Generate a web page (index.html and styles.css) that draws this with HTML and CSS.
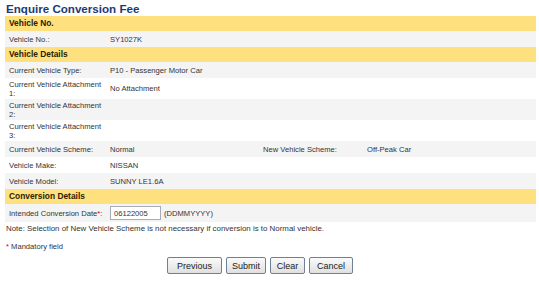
FILE: index.html
```html
<!DOCTYPE html>
<html>
<head>
<meta charset="utf-8">
<link rel="stylesheet" href="styles.css">
</head>
<body>
<div class="page">
  <h1 class="title">Enquire Conversion Fee</h1>
  <div class="section">Vehicle No.</div>
  <div class="row alt"><div class="lbl">Vehicle No.:</div><div class="val">SY1027K</div></div>
  <div class="section">Vehicle Details</div>
  <div class="row alt"><div class="lbl">Current Vehicle Type:</div><div class="val">P10 - Passenger Motor Car</div></div>
  <div class="row dbl"><div class="lbl">Current Vehicle Attachment 1:</div><div class="val">No Attachment</div></div>
  <div class="row dbl alt"><div class="lbl">Current Vehicle Attachment 2:</div><div class="val"></div></div>
  <div class="row dbl"><div class="lbl">Current Vehicle Attachment 3:</div><div class="val"></div></div>
  <div class="row alt"><div class="lbl">Current Vehicle Scheme:</div><div class="val">Normal</div><div class="lbl">New Vehicle Scheme:</div><div class="val">Off-Peak Car</div></div>
  <div class="row"><div class="lbl">Vehicle Make:</div><div class="val">NISSAN</div></div>
  <div class="row alt"><div class="lbl">Vehicle Model:</div><div class="val">SUNNY LE1.6A</div></div>
  <div class="section">Conversion Details</div>
  <div class="row alt inrow"><div class="lbl nowrap">Intended Conversion Date<span class="req">*</span>:</div><div class="val wide"><input class="field" type="text" value="06122005"><span class="hint">(DDMMYYYY)</span></div></div>
  <p class="note">Note: Selection of New Vehicle Scheme is not necessary if conversion is to Normal vehicle.</p>
  <p class="mand"><span class="req">*</span> Mandatory field</p>
  <div class="buttons">
    <button class="btn b-prev">Previous</button>
    <button class="btn b-sub">Submit</button>
    <button class="btn b-clr">Clear</button>
    <button class="btn b-can">Cancel</button>
  </div>
</div>
</body>
</html>
```
FILE: styles.css
```css
html, body { margin: 0; padding: 0; background: #fff; }
body { font-family: "Liberation Sans", Arial, sans-serif; font-size: 7.6px; color: #333; }
.page { padding: 0 3px 0 5px; }
.title { margin: 0; height: 16px; box-sizing: border-box; padding: 2px 0 0 1px; font-size: 11.6px; line-height: 14px; font-weight: bold; color: #1d3a74; }
.section { height: 15px; line-height: 15px; background: #ffe07e; font-weight: bold; color: #2b2100; padding-left: 4px; font-size: 8.4px; }
.row { display: grid; grid-template-columns: 101px 153px 104px 1fr; min-height: 16px; align-items: center; }
.row.alt { background: #f5f4f4; }
.row.dbl { min-height: 21px; }
.lbl, .val { padding: 1px 1px 1px 4px; line-height: 9px; }
.nowrap { white-space: nowrap; }
.val.wide { grid-column: 2 / 5; display: flex; align-items: center; }
.row.inrow { min-height: 18px; }
.field { width: 51px; height: 14px; box-sizing: border-box; border: 1px solid #a5acb5; font: 7.6px "Liberation Sans", Arial, sans-serif; padding: 0 3px; margin: 0 2px 0 0; color: #333; }
.hint { padding-left: 1px; }
.req { color: #d00; }
.note { margin: 2px 0 0 1px; line-height: 10px; font-size: 7.9px; }
.mand { margin: 8px 0 0 1px; line-height: 10px; }
.buttons { display: flex; gap: 4px; padding-left: 162px; margin-top: 5px; }
.btn { height: 17px; padding: 0; font: 9px "Liberation Sans", Arial, sans-serif; color: #222; background: linear-gradient(#fafafa, #e0e0e0); border: 1px solid #6f7f95; border-radius: 2px; text-align: center; }
.b-prev { width: 55px; }
.b-sub { width: 40px; }
.b-clr { width: 35px; }
.b-can { width: 44px; }
```
